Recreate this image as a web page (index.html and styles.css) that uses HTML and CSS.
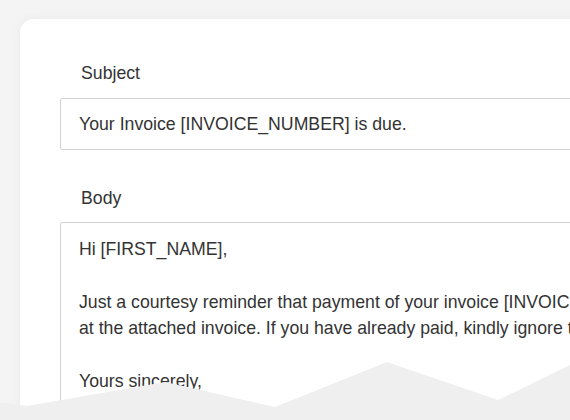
FILE: index.html
```html
<!DOCTYPE html>
<html lang="en">
<head>
<meta charset="utf-8">
<title>Email template</title>
<link rel="stylesheet" href="styles.css">
</head>
<body>
<main class="card">
  <section class="field">
    <label class="label">Subject</label>
    <div class="input">Your Invoice [INVOICE_NUMBER] is due.</div>
  </section>
  <section class="field field-body">
    <label class="label">Body</label>
    <div class="textarea">
      <p>Hi [FIRST_NAME],</p>
      <p>Just a courtesy reminder that payment of your invoice [INVOICE_NUMBER] is due. Please take a look<br>at the attached invoice. If you have already paid, kindly ignore this email.</p>
      <p>Yours sincerely,</p>
      <p>[COMPANY_NAME]</p>
    </div>
  </section>
</main>
<svg class="tear" width="570" height="70" viewBox="0 350 570 70" preserveAspectRatio="none" aria-hidden="true">
  <polygon points="0,402 27,406 165,382 275,407 387,362 498,400 570,365 570,420 0,420" fill="#efefef"/>
</svg>
</body>
</html>
```

FILE: styles.css
```css
html, body {
  margin: 0;
  height: 100%;
  overflow: hidden;
}
body {
  background: #f4f4f4;
  font-family: "Liberation Sans", Arial, sans-serif;
  color: #333;
  padding: 19px 0 0 20px;
  box-sizing: border-box;
  position: relative;
}
.card {
  width: 640px;
  height: 600px;
  background: #fff;
  border-radius: 14px 0 0 0;
  box-shadow: 0 0 10px rgba(0, 0, 0, 0.05);
  padding: 44px 0 0 40px;
  box-sizing: border-box;
}
.field {
  display: flex;
  flex-direction: column;
}
.field-body {
  margin-top: 38px;
}
.label {
  font-size: 17.7px;
  line-height: 20px;
  padding-left: 21px;
  margin-bottom: 15px;
  color: #333;
}
.field-body .label {
  margin-bottom: 14px;
}
.input, .textarea {
  border: 1px solid #d3d3d3;
  border-radius: 2px;
  font-size: 17.7px;
  line-height: 20px;
  padding: 15px 18px;
  white-space: nowrap;
  background: #fff;
}
.textarea {
  line-height: 26px;
  padding-top: 13px;
  height: 400px;
}
.textarea p {
  margin: 0 0 27px;
}
.tear {
  position: absolute;
  left: 0;
  bottom: 0;
  display: block;
}
```
